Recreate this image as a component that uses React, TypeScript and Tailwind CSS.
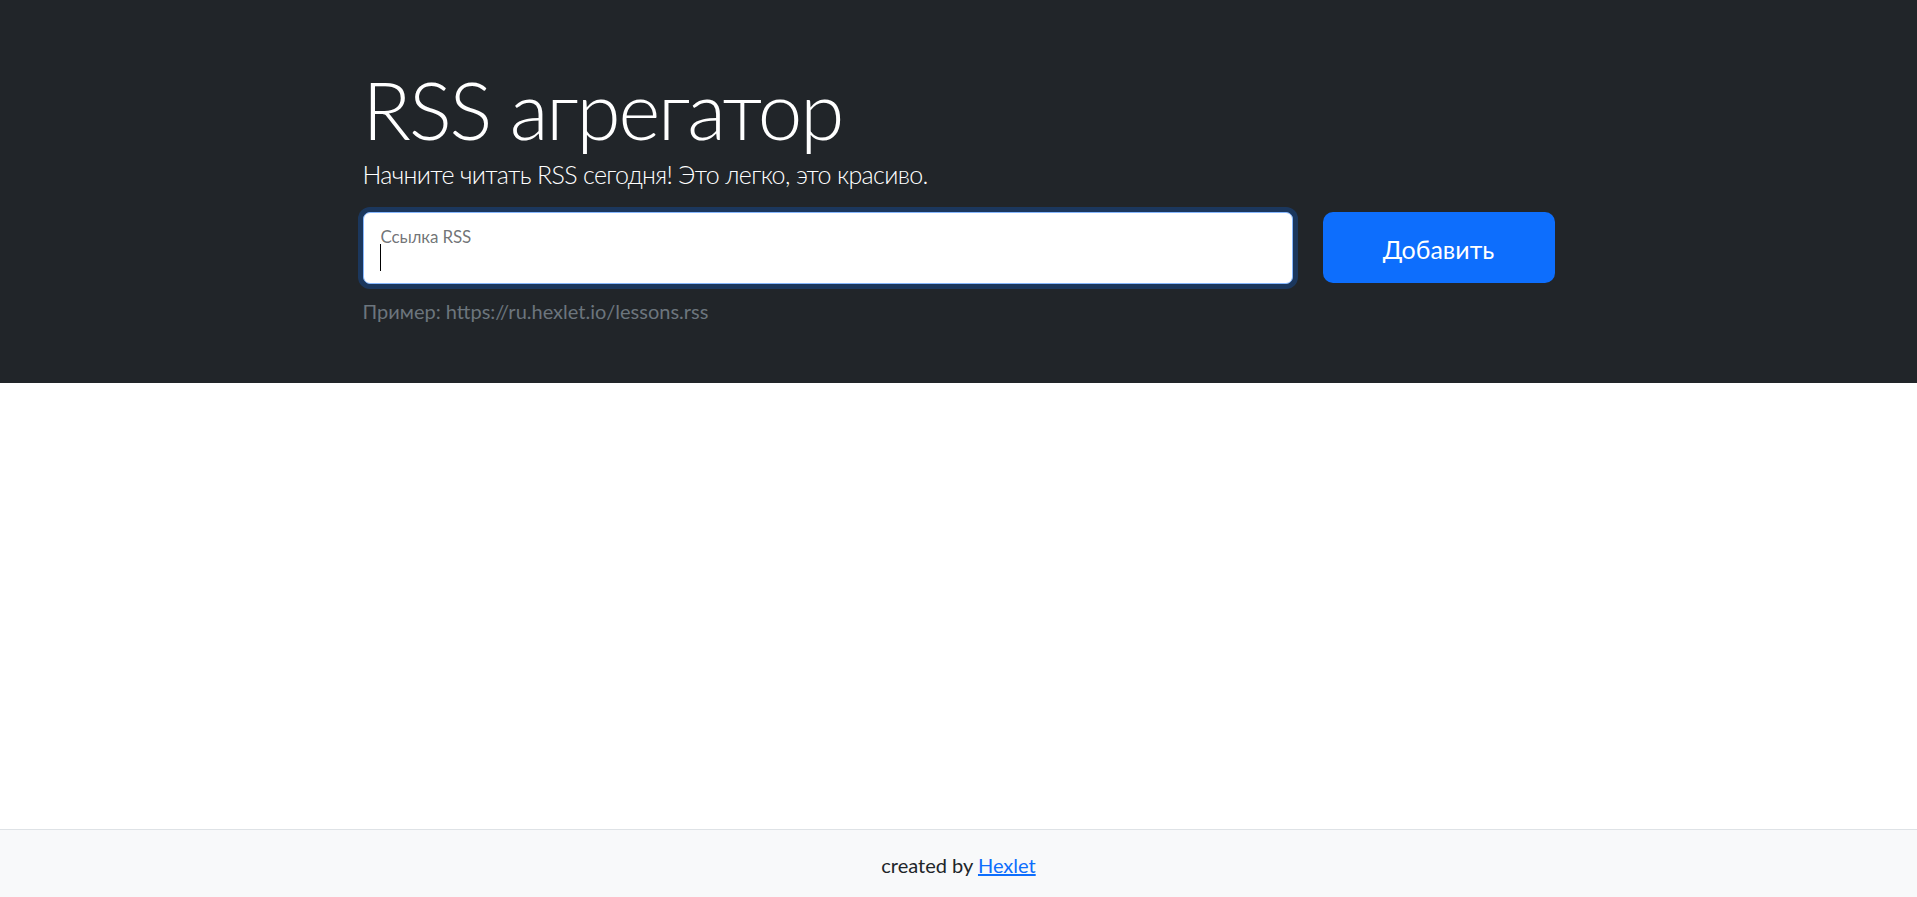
const font = "font-['Lato','Open_Sans',sans-serif]";

const Header = () => {
  return (
    <header className="bg-[#212529] pt-[61px] pb-[57px]">
      <div className="mx-auto w-[1192px] text-white">
        <h1 className="m-0 text-[80px] leading-[96px] font-light tracking-[-0.027em]">RSS агрегатор</h1>
        <p className="m-0 pt-[2px] text-[25px] leading-[30px] font-light tracking-[-0.026em]">
          Начните читать RSS сегодня! Это легко, это красиво.
        </p>

        <form className="mt-[23px] flex items-start gap-[30px]" onSubmit={(e) => e.preventDefault()}>
          {/* input with floating label */}
          <div className="relative flex-1">
            <input
              type="text"
              aria-label="url"
              className="block h-[72px] w-full rounded-[7px] border border-[#86b7fe] bg-white px-[15px] pt-[32px] text-[20px] text-[#212529] shadow-[0_0_0_5px_rgba(13,110,253,0.25)] outline-none"
            />
            <label className="pointer-events-none absolute left-[18px] top-[12px] text-[17px] leading-[25px] tracking-[-0.01em] text-[#212529a6]">
              Ссылка RSS
            </label>
            <span className="absolute left-[17px] top-[32px] h-[27px] w-px bg-black" />
          </div>
          <button
            type="submit"
            className="h-[71px] w-[232px] rounded-[10px] bg-[#0d6efd] pt-[4px] text-[25px] text-white"
          >
            Добавить
          </button>
        </form>

        <p className="m-0 mt-[12px] text-[20px] leading-[30px] text-[#6c757d]">
          Пример: https://ru.hexlet.io/lessons.rss
        </p>
      </div>
    </header>
  );
};

const Footer = () => {
  return (
    <footer className="h-[68px] border-t border-[#dee2e6] bg-[#f8f9fa] pt-[2px] flex items-center justify-center">
      <p className="m-0 text-[20px] leading-[30px] text-[#212529]">
        created by{' '}
        <a href="https://hexlet.io" className="text-[#0d6efd] underline">
          Hexlet
        </a>
      </p>
    </footer>
  );
};

export default function App() {
  return (
    <div className={`${font} flex min-h-screen flex-col bg-white`}>
      <Header />
      <main className="flex-1" />
      <Footer />
    </div>
  );
}
